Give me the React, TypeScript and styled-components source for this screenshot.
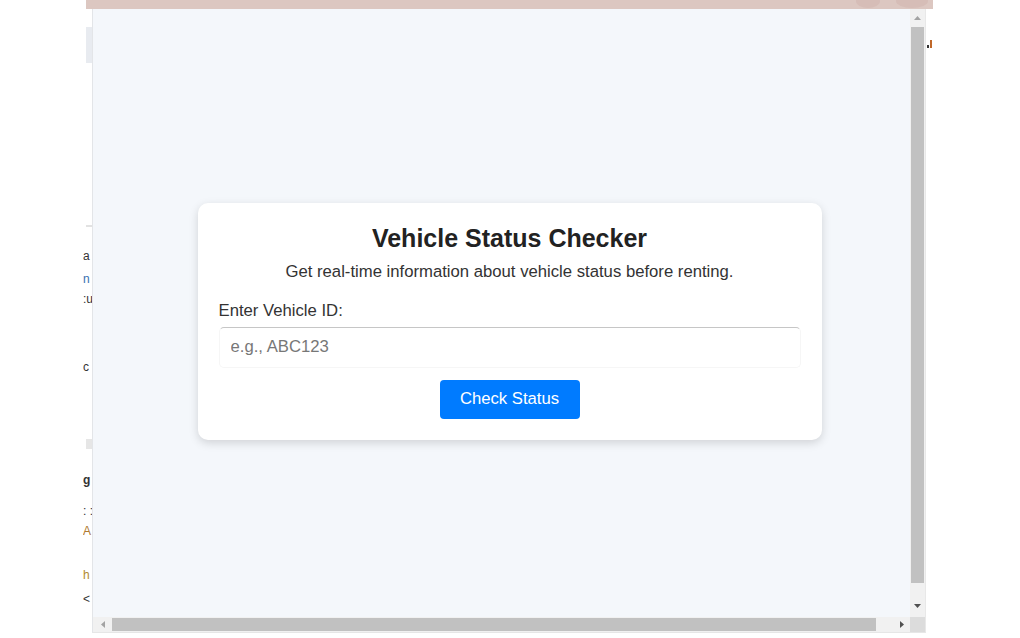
import React from "react";
import styled, { createGlobalStyle } from "styled-components";

const GlobalStyle = createGlobalStyle`
  html, body {
    margin: 0;
    padding: 0;
    background: #ffffff;
  }
  body {
    font-family: "Liberation Sans", Arial, sans-serif;
  }
`;

const Screen = styled.div`
  width: 1020px;
  height: 638px;
  display: flex;
  flex-direction: column;
  overflow: hidden;
  background: #ffffff;
`;

const TopBar = styled.div`
  position: relative;
  flex-shrink: 0;
  margin-left: 86px;
  width: 847px;
  height: 9px;
  background: #dcc7c1;
`;

const Bump = styled.div<{ $left: number; $width: number }>`
  position: absolute;
  top: -6px;
  left: ${(p) => p.$left}px;
  width: ${(p) => p.$width}px;
  height: 14px;
  border-radius: 50%;
  background: #d6bdb7;
`;

const MainRow = styled.div`
  display: flex;
  flex: 1;
`;

const LeftStrip = styled.div`
  width: 92px;
  flex-shrink: 0;
  display: flex;
  flex-direction: column;
`;

const Shade = styled.div<{ $top: number; $height: number; $color: string }>`
  margin-top: ${(p) => p.$top}px;
  margin-left: 86px;
  width: 6px;
  height: ${(p) => p.$height}px;
  background: ${(p) => p.$color};
`;

const Clip = styled.div<{ $top: number; $color?: string; $bold?: boolean }>`
  margin-top: ${(p) => p.$top}px;
  margin-left: 83px;
  width: 9px;
  height: 14px;
  overflow: hidden;
  font-size: 12px;
  line-height: 14px;
  white-space: nowrap;
  color: ${(p) => p.$color ?? "#333"};
  font-weight: ${(p) => (p.$bold ? 700 : 400)};
`;

const Window = styled.div`
  width: 834px;
  height: 624px;
  flex-shrink: 0;
  box-sizing: border-box;
  border-left: 1px solid #e3e5e8;
  border-right: 1px solid #e8e8e8;
  border-bottom: 1px solid #e6e6e6;
  display: grid;
  grid-template-columns: 817px 15px;
  grid-template-rows: 608px 15px;
`;

const Viewport = styled.div`
  background: #f4f7fb;
  overflow: hidden;
`;

const Doc = styled.div`
  width: 833px;
  height: 624px;
  display: flex;
  align-items: center;
  justify-content: center;
`;

const Card = styled.div`
  width: 624px;
  box-sizing: border-box;
  padding: 21px;
  background: #ffffff;
  border-radius: 10px;
  box-shadow: 0 3px 10px rgba(0, 0, 0, 0.15);
`;

const Title = styled.h2`
  margin: 0;
  text-align: center;
  font-size: 25px;
  line-height: 29px;
  font-weight: 700;
  color: #222;
`;

const Subtitle = styled.p`
  margin: 9px 0 0;
  text-align: center;
  font-size: 16.7px;
  line-height: 19px;
  color: #333;
`;

const Label = styled.label`
  display: block;
  margin-top: 20px;
  font-size: 16.7px;
  line-height: 19px;
  color: #333;
`;

const Input = styled.input`
  display: block;
  width: 100%;
  height: 41px;
  margin-top: 7px;
  box-sizing: border-box;
  padding: 0 11px;
  border: 1px solid #f6f6f6;
  border-top-color: #c6c6c6;
  border-radius: 5px;
  background: #ffffff;
  font-family: inherit;
  font-size: 16.7px;
  color: #333;
  outline: none;

  &::placeholder {
    color: #777;
  }
`;

const Button = styled.button`
  display: block;
  margin: 12px auto 0;
  width: 140px;
  height: 39px;
  border: none;
  border-radius: 4px;
  background: #007bff;
  color: #ffffff;
  font-family: inherit;
  font-size: 16.7px;
  cursor: pointer;
`;

const VScroll = styled.div`
  background: #f1f1f1;
  display: flex;
  flex-direction: column;
  align-items: center;
`;

const HScroll = styled.div`
  background: #f1f1f1;
  display: flex;
  align-items: center;
`;

const ArrowBox = styled.div<{ $w: number; $h: number }>`
  width: ${(p) => p.$w}px;
  height: ${(p) => p.$h}px;
  flex-shrink: 0;
  display: flex;
  align-items: center;
  justify-content: center;
`;

const Thumb = styled.div<{ $w: number; $h: number }>`
  width: ${(p) => p.$w}px;
  height: ${(p) => p.$h}px;
  flex-shrink: 0;
  background: #c1c1c1;
`;

const Spacer = styled.div`
  flex: 1;
`;

const Corner = styled.div`
  background: #dcdcdc;
`;

const RightStrip = styled.div`
  width: 20px;
  display: flex;
  flex-direction: column;
`;

const Tick = styled.div`
  margin-top: 31px;
  margin-left: 1px;
  display: flex;
  gap: 1px;
  align-items: flex-end;
`;

const TickBar = styled.span<{ $color: string; $h: number }>`
  width: 2px;
  height: ${(p) => p.$h}px;
  background: ${(p) => p.$color};
`;

type Dir = "up" | "down" | "left" | "right";

const Arrow: React.FC<{ dir: Dir; color: string }> = ({ dir, color }) => {
  const pts: Record<Dir, string> = {
    up: "0,4 3.5,0 7,4",
    down: "0,0 7,0 3.5,4",
    left: "4,0 4,7 0,3.5",
    right: "0,0 4,3.5 0,7",
  };
  const vertical = dir === "up" || dir === "down";
  return (
    <svg width={vertical ? 7 : 4} height={vertical ? 4 : 7} viewBox={vertical ? "0 0 7 4" : "0 0 4 7"}>
      <polygon points={pts[dir]} fill={color} />
    </svg>
  );
};

const VehicleStatusChecker: React.FC = () => (
  <Card>
    <Title>Vehicle Status Checker</Title>
    <Subtitle>Get real-time information about vehicle status before renting.</Subtitle>
    <Label htmlFor="vehicleId">Enter Vehicle ID:</Label>
    <Input id="vehicleId" type="text" placeholder="e.g., ABC123" />
    <Button type="button">Check Status</Button>
  </Card>
);

export default function App() {
  return (
    <>
      <GlobalStyle />
      <Screen>
        <TopBar>
          <Bump $left={770} $width={24} />
          <Bump $left={810} $width={32} />
        </TopBar>
        <MainRow>
          <LeftStrip>
            <Shade $top={18} $height={36} $color="#e8ebf0" />
            <Shade $top={162} $height={2} $color="#e2e2e2" />
            <Clip $top={22}>a</Clip>
            <Clip $top={9} $color="#3b6fb0">n</Clip>
            <Clip $top={6}>:u</Clip>
            <Clip $top={54}>c</Clip>
            <Shade $top={65} $height={10} $color="#e6e6e6" />
            <Clip $top={24} $bold>g</Clip>
            <Clip $top={17}>: :</Clip>
            <Clip $top={6} $color="#b07a30">A</Clip>
            <Clip $top={30} $color="#b08a30">h</Clip>
            <Clip $top={10}>&lt;</Clip>
          </LeftStrip>
          <Window>
            <Viewport>
              <Doc>
                <VehicleStatusChecker />
              </Doc>
            </Viewport>
            <VScroll>
              <ArrowBox $w={15} $h={18}>
                <Arrow dir="up" color="#a3a3a3" />
              </ArrowBox>
              <Thumb $w={13} $h={556} />
              <Spacer />
              <ArrowBox $w={15} $h={22}>
                <Arrow dir="down" color="#505050" />
              </ArrowBox>
            </VScroll>
            <HScroll>
              <ArrowBox $w={19} $h={15}>
                <Arrow dir="left" color="#a3a3a3" />
              </ArrowBox>
              <Thumb $w={764} $h={13} />
              <Spacer />
              <ArrowBox $w={17} $h={15}>
                <Arrow dir="right" color="#505050" />
              </ArrowBox>
            </HScroll>
            <Corner />
          </Window>
          <RightStrip>
            <Tick>
              <TickBar $color="#333" $h={3} />
              <TickBar $color="#c0682a" $h={8} />
            </Tick>
          </RightStrip>
        </MainRow>
      </Screen>
    </>
  );
}
